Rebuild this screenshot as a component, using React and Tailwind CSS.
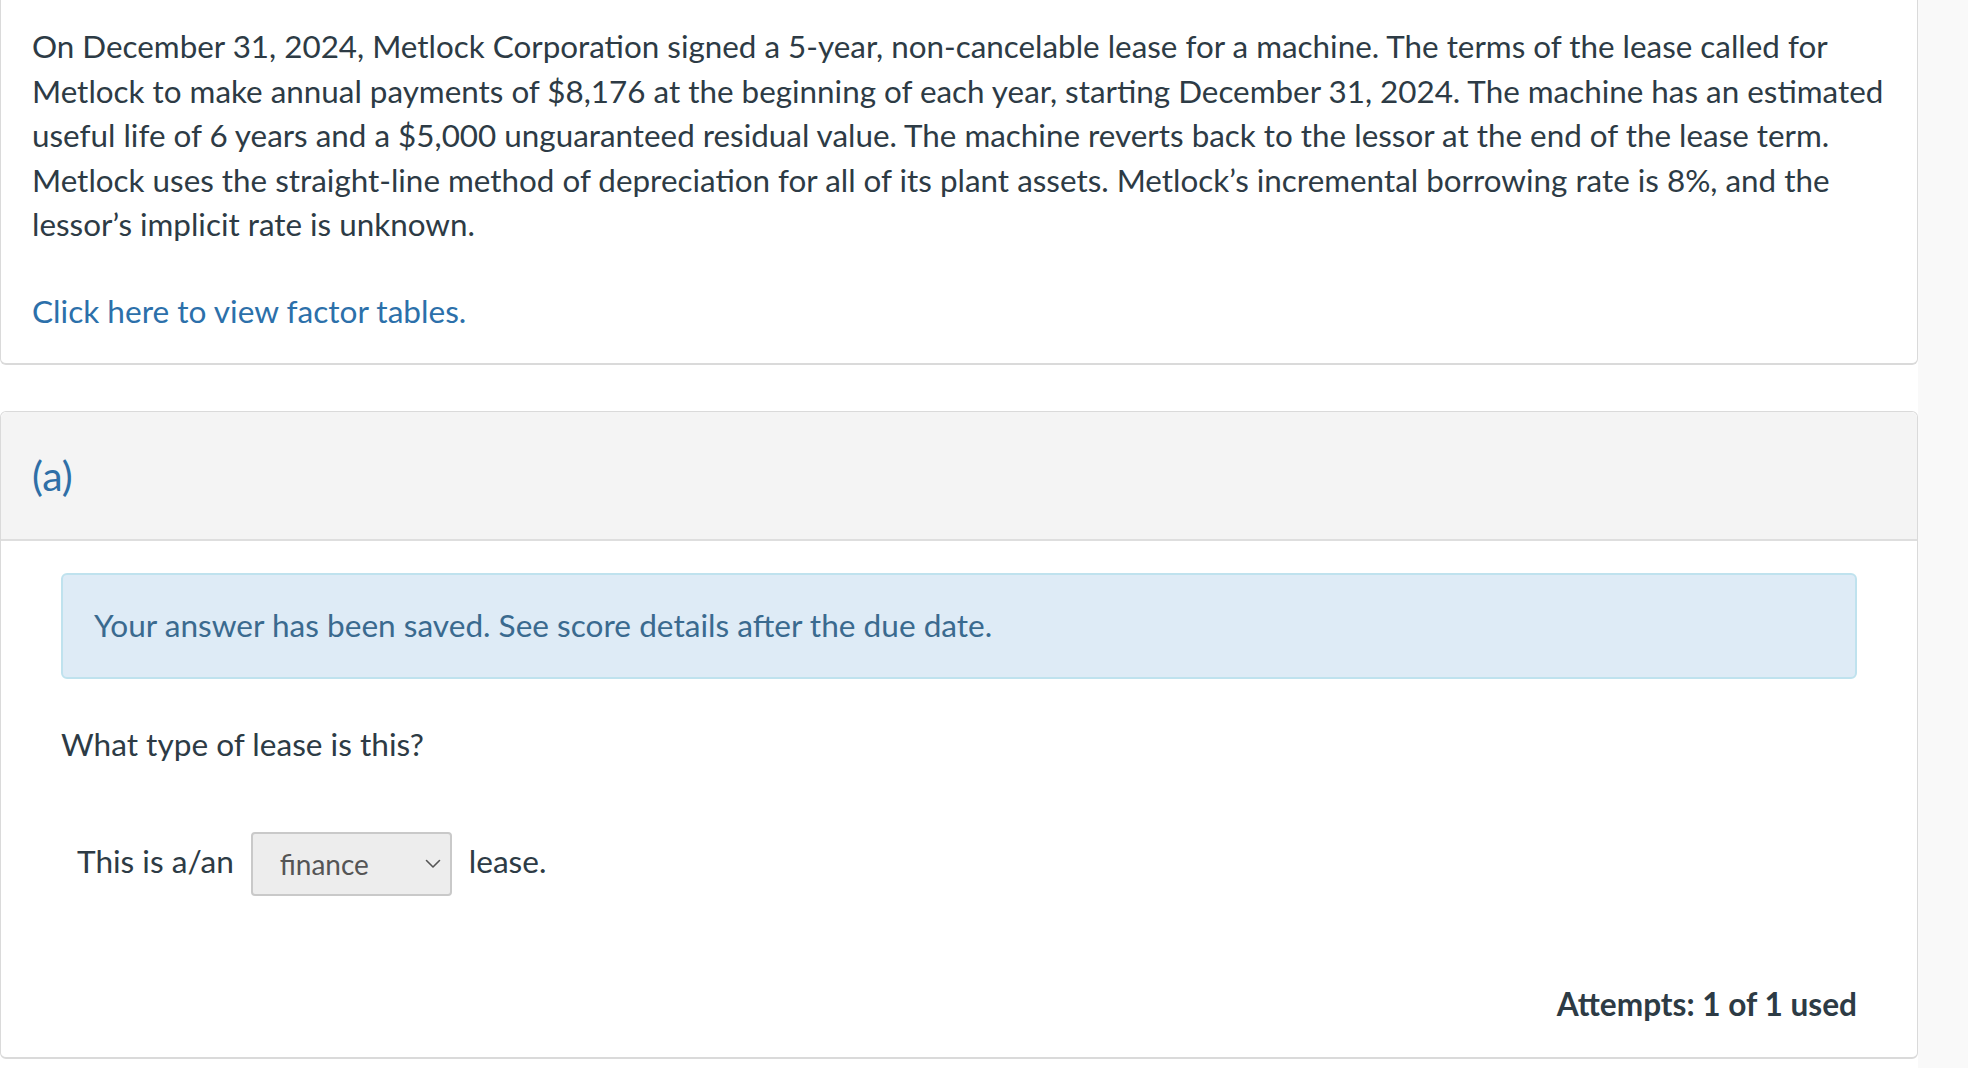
import { useState } from 'react';

const TEXT = 'text-[#2d3b45]';

const PROBLEM_LINES = [
  'On December 31, 2024, Metlock Corporation signed a 5-year, non-cancelable lease for a machine. The terms of the lease called for',
  'Metlock to make annual payments of $8,176 at the beginning of each year, starting December 31, 2024. The machine has an estimated',
  'useful life of 6 years and a $5,000 unguaranteed residual value. The machine reverts back to the lessor at the end of the lease term.',
  'Metlock uses the straight-line method of depreciation for all of its plant assets. Metlock’s incremental borrowing rate is 8%, and the',
  'lessor’s implicit rate is unknown.',
];

function LeaseSelect({ value }) {
  return (
    <div className="flex h-[64px] w-[201px] items-center justify-between rounded-[4px] border-2 border-[#c9c9c9] bg-[#ededed] pl-[27px] pr-[9px]">
      <span className="text-[28px] leading-none text-[#555555]">{value}</span>
      <svg width="16" height="10" viewBox="0 0 16 10" fill="none">
        <path d="M1.5 1.5 L8 8 L14.5 1.5" stroke="#555555" strokeWidth="1.6" strokeLinecap="round" strokeLinejoin="round" />
      </svg>
    </div>
  );
}

export default function App() {
  const [lease] = useState('finance');

  return (
    <div className={`flex min-h-[1068px] bg-white [font-family:Lato,'Noto_Sans',sans-serif] ${TEXT}`}>
      <div className="w-[1918px] shrink-0">
        {/* problem statement, top cut off by the scroll position */}
        <div className="rounded-b-[6px] border-x border-b-2 border-[#dadada] pl-[31px] pb-[29px] pt-[24px]">
          <p className="whitespace-nowrap text-[31.4px] leading-[44.6px]">
            {PROBLEM_LINES.map((line, i) => (
              <span key={i} className="block">{line}</span>
            ))}
          </p>
          <p className="mt-[42px] text-[31.6px] leading-[44.6px]">
            <a href="#" className="text-[#2c70aa]">Click here to view factor tables.</a>
          </p>
        </div>

        {/* part (a) */}
        <div className="mt-[46px] rounded-[6px] border border-b-2 border-[#dadada]">
          <div className="flex h-[129px] items-center rounded-t-[6px] border-b-2 border-[#dedede] bg-[#f4f4f4] pl-[31px]">
            <h2 className="text-[41px] leading-[45px] text-[#2f6fa7]">(a)</h2>
          </div>

          <div className="px-[60px] pb-[30px] pt-[32px]">
            <div className="flex h-[106px] items-center rounded-[6px] border-2 border-[#bfe2ee] bg-[#deebf6] pl-[31px]">
              <p className="text-[31.6px] leading-[44.6px] text-[#3a6a8f]">
                Your answer has been saved. See score details after the due date.
              </p>
            </div>

            <p className="mt-[43px] text-[31.6px] leading-[44.6px]">What type of lease is this?</p>

            <div className="mt-[66px] flex items-center gap-[17px] pl-[16px] text-[31.6px]">
              <span className="-mt-[4px]">This is a/an</span>
              <LeaseSelect value={lease} />
              <span className="-mt-[4px]">lease.</span>
            </div>

            <p className="mt-[86px] text-right text-[31.6px] font-bold leading-[44.6px]">Attempts: 1 of 1 used</p>
          </div>
        </div>
      </div>

      <div className="flex-1 bg-[#f9f9f9]" />
    </div>
  );
}
